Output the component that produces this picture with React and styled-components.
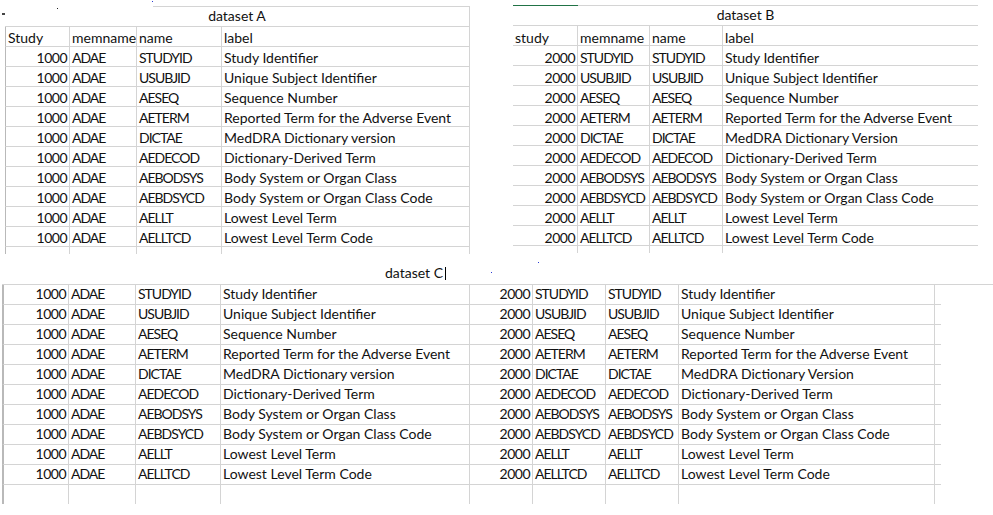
import React from "react";
import styled, { createGlobalStyle } from "styled-components";

const GRID = "#d4d4d4";
const EDGE = "#b9b9b9";

const GlobalStyle = createGlobalStyle`
  html, body { margin: 0; padding: 0; background: #fff; }
  body { font-family: Lato, "Noto Sans", sans-serif; }
`;

const Sheet = styled.div`
  position: relative;
  width: 993px;
  height: 515px;
  overflow: hidden;
  background: #fff;
  font-family: Lato, "Noto Sans", sans-serif;
  font-size: 14px;
  color: #111;
`;

const TopRow = styled.div`
  display: flex;
  align-items: flex-start;
  gap: 43px;
  padding-left: 5px;
  height: 254px;
`;

const Grid = styled.div`
  display: grid;
  grid-template-columns: ${(p) => p.$cols};
  margin-top: ${(p) => p.$top || 0}px;
  margin-left: ${(p) => p.$left || 0}px;
  border-top: ${(p) => (p.$framed ? `1px solid ${GRID}` : "none")};
  align-self: flex-start;
`;

const TitleCell = styled.div`
  grid-column: 1 / -1;
  box-sizing: border-box;
  height: 21px;
  padding-top: 1px;
  line-height: 17px;
  text-align: center;
  white-space: nowrap;
  border-bottom: 1px solid ${GRID};
  border-right: ${(p) => (p.$right ? `1px solid ${GRID}` : "none")};
  background: ${(p) => p.$line};
`;

const Cell = styled.div`
  box-sizing: border-box;
  height: ${(p) => p.$h || 20}px;
  padding: ${(p) => p.$pt || 0}px 2px 0 2px;
  line-height: 17px;
  white-space: nowrap;
  overflow-x: clip;
  text-align: ${(p) => (p.$kind === "num" ? "right" : "left")};
  letter-spacing: ${(p) =>
    p.$kind === "caps" ? "-1px" : p.$kind === "num" ? "-0.5px" : "normal"};
  border-bottom: ${(p) => (p.$open ? "none" : `1px solid ${GRID}`)};
  border-right: ${(p) => (p.$noRight ? "none" : `1px solid ${GRID}`)};
  border-left: ${(p) => p.$edge || "none"};
`;

const Caption = styled.div`
  box-sizing: border-box;
  height: 30px;
  padding: 9px 0 0 385px;
  line-height: 20px;
  white-space: nowrap;
`;

const Caret = styled.span`
  display: inline-block;
  width: 1px;
  height: 13px;
  margin-left: 2px;
  background: #000;
  vertical-align: -2px;
`;

const Speck = styled.span`
  position: absolute;
  left: ${(p) => p.$x}px;
  top: ${(p) => p.$y}px;
  width: ${(p) => p.$w || 1}px;
  height: ${(p) => p.$hh || 1}px;
  background: ${(p) => p.$c || "#000"};
`;

const vars = [
  ["STUDYID", "Study Identifier", "Study Identifier"],
  ["USUBJID", "Unique Subject Identifier", "Unique Subject Identifier"],
  ["AESEQ", "Sequence Number", "Sequence Number"],
  ["AETERM", "Reported Term for the Adverse Event", "Reported Term for the Adverse Event"],
  ["DICTAE", "MedDRA Dictionary version", "MedDRA Dictionary Version"],
  ["AEDECOD", "Dictionary-Derived Term", "Dictionary-Derived Term"],
  ["AEBODSYS", "Body System or Organ Class", "Body System or Organ Class"],
  ["AEBDSYCD", "Body System or Organ Class Code", "Body System or Organ Class Code"],
  ["AELLT", "Lowest Level Term", "Lowest Level Term"],
  ["AELLTCD", "Lowest Level Term Code", "Lowest Level Term Code"],
];

const rowsA = vars.map(([n, la]) => ["1000", "ADAE", n, la]);
const rowsB = vars.map(([n, , lb]) => ["2000", n, n, lb]);

const kindOf = (c) => (/^\d+$/.test(c) ? "num" : /^[A-Z]+$/.test(c) ? "caps" : "text");

function Row({ cells, pt, edge, lastOpen, h, open }) {
  return cells.map((c, i) => (
    <Cell
      key={i}
      $pt={pt}
      $h={h}
      $open={open}
      $kind={kindOf(c)}
      $edge={i === 0 ? edge : undefined}
      $noRight={lastOpen && i === cells.length - 1}
    >
      {c}
    </Cell>
  ));
}

const lineA = `linear-gradient(${GRID}, ${GRID}) right top / calc(100% - 148px) 1px no-repeat`;
const lineB = `linear-gradient(#217346, #217346) left top / 65px 1px no-repeat, linear-gradient(${GRID}, ${GRID}) left top / 100% 1px no-repeat`;

export default function App() {
  return (
    <Sheet>
      <GlobalStyle />
      <TopRow>
        <Grid $cols="65px 67px 85px 248px" $top={6}>
          <TitleCell $right $line={lineA}>dataset A</TitleCell>
          <Row cells={["Study", "memname", "name", "label"]} pt={2} edge={`1px solid ${EDGE}`} />
          {rowsA.map((r, i) => (
            <Row key={i} cells={r} pt={2} edge={`1px solid ${EDGE}`} />
          ))}
          <Row cells={["", "", "", ""]} h={7} open edge={`1px solid ${EDGE}`} />
        </Grid>
        <Grid $cols="65px 72px 73px 255px" $top={5}>
          <TitleCell $line={lineB}>dataset B</TitleCell>
          <Row cells={["study", "memname", "name", "label"]} pt={3} lastOpen />
          {rowsB.map((r, i) => (
            <Row key={i} cells={r} pt={3} lastOpen />
          ))}
          <Row cells={["", "", "", ""]} h={7} open lastOpen />
        </Grid>
      </TopRow>
      <Caption>
        dataset C
        <Caret />
      </Caption>
      <Grid $cols="67px 67px 85px 249px 63px 73px 73px 256px 6px" $left={2} $framed>
        {rowsA.map((r, i) => (
          <Row key={i} cells={[...r, ...rowsB[i], ""]} pt={0} edge={`2px solid ${EDGE}`} lastOpen />
        ))}
        <Row cells={["", "", "", "", "", "", "", "", ""]} h={19} open edge={`2px solid ${EDGE}`} lastOpen />
      </Grid>
      <Speck $x={2} $y={13} $w={3} $hh={2} $c="#444" />
      <Speck $x={57} $y={8} $c="#222" />
      <Speck $x={152} $y={1} $c="#2b3bd6" />
      <Speck $x={491} $y={272} $c="#2b3bd6" />
      <Speck $x={538} $y={262} $c="#2b3bd6" />
    </Sheet>
  );
}
